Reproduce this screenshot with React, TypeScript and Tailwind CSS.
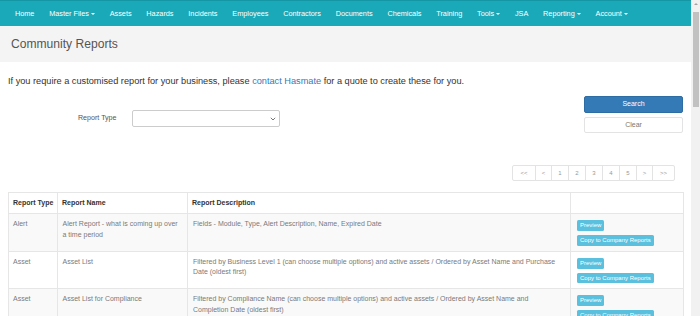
import React from 'react';

const navItems: { label: string; caret?: boolean }[] = [
  { label: 'Home' },
  { label: 'Master Files', caret: true },
  { label: 'Assets' },
  { label: 'Hazards' },
  { label: 'Incidents' },
  { label: 'Employees' },
  { label: 'Contractors' },
  { label: 'Documents' },
  { label: 'Chemicals' },
  { label: 'Training' },
  { label: 'Tools', caret: true },
  { label: 'JSA' },
  { label: 'Reporting', caret: true },
  { label: 'Account', caret: true },
];

const pages = ['<<', '<', '1', '2', '3', '4', '5', '>', '>>'];

const rows = [
  {
    type: 'Alert',
    name: ['Alert Report - what is coming up over', 'a time period'],
    desc: ['Fields - Module, Type, Alert Description, Name, Expired Date'],
  },
  {
    type: 'Asset',
    name: ['Asset List'],
    desc: [
      'Filtered by Business Level 1 (can choose multiple options) and active assets / Ordered by Asset Name and Purchase',
      'Date (oldest first)',
    ],
  },
  {
    type: 'Asset',
    name: ['Asset List for Compliance'],
    desc: [
      'Filtered by Compliance Name (can choose multiple options) and active assets / Ordered by Asset Name and',
      'Completion Date (oldest first)',
    ],
  },
];

function Caret() {
  return (
    <span className="inline-block ml-[2px] align-middle w-0 h-0 border-l-[2.5px] border-r-[2.5px] border-t-[2.5px] border-l-transparent border-r-transparent border-t-white" />
  );
}

export default function App() {
  return (
    <div className="flex h-[316px] w-[700px] overflow-hidden bg-white font-['Liberation_Sans',Arial,sans-serif]">
      <div className="flex-1 min-w-0">
        {/* Navbar */}
        <nav className="h-[26px] bg-[#1aa9b8] border-t border-[#1596a4] flex items-center pl-[7.5px]">
          {navItems.map(item => (
            <span key={item.label} className="px-[7.4px] text-[7.3px] text-white leading-none whitespace-nowrap">
              {item.label}
              {item.caret && <Caret />}
            </span>
          ))}
        </nav>

        {/* Page header */}
        <div className="h-[36px] bg-[#f4f4f4] flex items-center pl-[11px]">
          <h1 className="text-[12.1px] text-[#555] leading-none">Community Reports</h1>
        </div>

        <div className="px-[8px]">
          <p className="mt-[12.5px] text-[9.2px] leading-[13px] text-[#333] whitespace-nowrap">
            If you require a customised report for your business, please{' '}
            <span className="text-[#337ab7]">contact Hasmate</span> for a quote to create these for you.
          </p>

          {/* Search form */}
          <div className="mt-[8.5px] flex justify-between">
            <div className="mt-[14px] flex items-start pl-[70px]">
              <label className="w-[54px] mt-[4px] text-[7.1px] leading-[9px] text-[#555]">Report Type</label>
              <div className="w-[148px] h-[17px] border border-[#ccc] rounded-[2px] bg-white flex items-center justify-end pr-[3px]">
                <svg width="6" height="4" viewBox="0 0 6 4" fill="none">
                  <path d="M0.8 0.8L3 3L5.2 0.8" stroke="#666" strokeWidth="0.9" />
                </svg>
              </div>
            </div>
            <div className="w-[99px] flex flex-col gap-[4px]">
              <div className="h-[17px] rounded-[2px] bg-[#337ab7] border border-[#2e6da4] flex items-center justify-center text-[7px] text-white">
                Search
              </div>
              <div className="h-[16px] rounded-[2px] bg-white border border-[#e3e3e3] flex items-center justify-center text-[7px] text-[#777]">
                Clear
              </div>
            </div>
          </div>

          {/* Pagination */}
          <div className="mt-[32px] flex justify-end pr-[8px]">
            <div className="flex h-[16px] border border-[#e3e3e3] rounded-[2px]">
              {pages.map((p, i) => (
                <span
                  key={i}
                  className={`flex items-center justify-center text-[6px] text-[#999] ${i > 0 ? 'border-l border-[#e3e3e3]' : ''} ${p.length === 2 ? 'w-[22px]' : i === 1 || i === 7 ? 'w-[16px]' : 'w-[17px]'}`}
                >
                  {p}
                </span>
              ))}
            </div>
          </div>

          {/* Table */}
          <table className="mt-[11px] w-full table-fixed border-collapse text-[7px] leading-[10.6px]">
            <colgroup>
              <col className="w-[49px]" />
              <col className="w-[130px]" />
              <col className="w-[383px]" />
              <col className="w-[113px]" />
            </colgroup>
            <thead>
              <tr>
                {['Report Type', 'Report Name', 'Report Description', ''].map((h, i) => (
                  <th
                    key={i}
                    className="h-[21px] border border-[#e6e6e6] px-[4px] text-left font-bold text-[#333] whitespace-nowrap"
                  >
                    {h}
                  </th>
                ))}
              </tr>
            </thead>
            <tbody>
              {rows.map((r, i) => (
                <tr key={i} className={i % 2 === 0 ? 'bg-[#f9f9f9]' : 'bg-white'}>
                  <td className="align-top border border-[#e6e6e6] px-[4px] pt-[5px] text-[#7a7a7a]">{r.type}</td>
                  <td className="align-top border border-[#e6e6e6] px-[4.5px] pt-[5px] text-[#7a7a7a] whitespace-nowrap">
                    {r.name.map((n, j) => (
                      <div key={j}>{n}</div>
                    ))}
                  </td>
                  <td className="align-top border border-[#e6e6e6] px-[5px] pt-[5px] text-[#7a7a7a] whitespace-nowrap">
                    {r.desc.map((d, j) => (
                      <div key={j}>{d}</div>
                    ))}
                  </td>
                  <td className="align-top border border-[#e6e6e6] px-[6px] pt-[6px] pb-[5px]">
                    <div className="flex flex-col items-start gap-[4px]">
                      <span className="h-[11px] px-[3px] rounded-[1.5px] bg-[#5bc0de] text-white text-[6px] leading-[11px]">
                        Preview
                      </span>
                      <span className="h-[10.5px] px-[3px] rounded-[1.5px] bg-[#5bc0de] text-white text-[6px] leading-[10.5px] whitespace-nowrap">
                        Copy to Company Reports
                      </span>
                    </div>
                  </td>
                </tr>
              ))}
            </tbody>
          </table>
        </div>
      </div>

      {/* Scrollbar */}
      <div className="w-[9px] bg-[#f1f1f1] flex flex-col items-center">
        <div className="mt-[3px] w-0 h-0 border-l-[2px] border-r-[2px] border-b-[2.5px] border-l-transparent border-r-transparent border-b-[#a3a3a3]" />
        <div className="mt-[7px] w-[6px] h-[95px] bg-[#c1c1c1]" />
      </div>
    </div>
  );
}
